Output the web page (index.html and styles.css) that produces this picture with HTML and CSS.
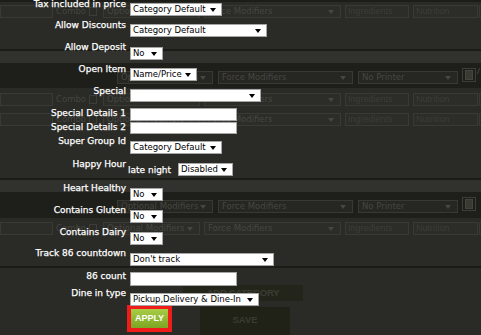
FILE: index.html
```html
<!DOCTYPE html>
<html>
<head>
<meta charset="utf-8">
<title>Item settings</title>
<link rel="stylesheet" href="styles.css">
</head>
<body>
<div class="page">
  <div class="bg">
    <div class="band-top"></div>
    <div class="sec s1">
      <div class="combo-row">
        <div class="f-in w53"></div>
        <span class="f-txt combo">Combo</span>
        <span class="f-chk"></span>
        <div class="f-sel w97 m3">Optional Modifiers</div>
        <div class="f-sel w137 m4">Force Modifiers</div>
        <div class="f-in w64 m4 ph">Ingredients</div>
        <div class="f-in w65 m4 ph">Nutrition</div>
        <div class="f-in w20 m1"></div>
      </div>
    </div>
    <div class="line"></div>
    <div class="light"></div>
    <div class="dark">
      <div class="printer-row">
        <div class="f-sel w96">Optional Modifiers</div>
        <div class="f-sel w135 m5">Force Modifiers</div>
        <div class="f-sel w100 m5">No Printer</div>
        <div class="f-icon"><span></span></div>
        <div class="f-grip"></div>
      </div>
    </div>
    <div class="sec s2">
      <div class="combo-row">
        <div class="f-in w53"></div>
        <span class="f-txt combo">Combo</span>
        <span class="f-chk"></span>
        <div class="f-sel w97 m3">Optional Modifiers</div>
        <div class="f-sel w137 m4">Force Modifiers</div>
        <div class="f-in w64 m4 ph">Ingredients</div>
        <div class="f-in w65 m4 ph">Nutrition</div>
        <div class="f-in w20 m1"></div>
      </div>
      <div class="combo-row second">
        <div class="f-in w53"></div>
        <span class="f-txt combo">Combo</span>
        <span class="f-chk"></span>
        <div class="f-sel w97 m3">Optional Modifiers</div>
        <div class="f-sel w137 m4">Force Modifiers</div>
        <div class="f-in w64 m4 ph">Ingredients</div>
        <div class="f-in w65 m4 ph">Nutrition</div>
        <div class="f-in w20 m1"></div>
      </div>
    </div>
    <div class="line"></div>
    <div class="light"></div>
    <div class="dark d2">
      <div class="printer-row">
        <div class="f-sel w96">Optional Modifiers</div>
        <div class="f-sel w135 m5">Force Modifiers</div>
        <div class="f-sel w100 m5">No Printer</div>
        <div class="f-icon"><span></span></div>
      </div>
    </div>
    <div class="sec s3">
      <div class="combo-row">
        <div class="f-in w53"></div>
        <span class="f-txt combo">Combo</span>
        <span class="f-chk"></span>
        <div class="f-sel w97 m3">Optional Modifiers</div>
        <div class="f-sel w137 m4">Force Modifiers</div>
        <div class="f-in w64 m4 ph">Ingredients</div>
        <div class="f-in w65 m4 ph">Nutrition</div>
        <div class="f-in w20 m1"></div>
      </div>
    </div>
    <div class="line"></div>
    <div class="foot">
      <div class="btn-add">ADD CATEGORY</div>
      <div class="btn-save">SAVE</div>
    </div>
  </div>

  <form class="overlay">
    <div class="frow h21">
      <label class="lbl">Tax included in price</label>
      <div class="ctl t4"><div class="sel w92">Category Default</div></div>
    </div>
    <div class="frow">
      <label class="lbl">Allow Discounts</label>
      <div class="ctl t4"><div class="sel w137">Category Default</div></div>
    </div>
    <div class="frow">
      <label class="lbl">Allow Deposit</label>
      <div class="ctl t5"><div class="sel w33">No</div></div>
    </div>
    <div class="frow">
      <label class="lbl">Open Item</label>
      <div class="ctl t4"><div class="sel w67">Name/Price</div></div>
    </div>
    <div class="frow">
      <label class="lbl">Special</label>
      <div class="ctl t3"><div class="sel w131"></div></div>
    </div>
    <div class="frow h14">
      <label class="lbl">Special Details 1</label>
      <div class="ctl t0"><div class="inp w107"></div></div>
    </div>
    <div class="frow h14">
      <label class="lbl">Special Details 2</label>
      <div class="ctl t0"><div class="inp w107 short"></div></div>
    </div>
    <div class="frow h23">
      <label class="lbl">Super Group Id</label>
      <div class="ctl t5"><div class="sel w92">Category Default</div></div>
    </div>
    <div class="frow h24">
      <label class="lbl">Happy Hour</label>
      <div class="ctl t4 hh"><span class="hh-txt">late night</span><div class="sel w55">Disabled</div></div>
    </div>
    <div class="frow">
      <label class="lbl">Heart Healthy</label>
      <div class="ctl t5"><div class="sel w33">No</div></div>
    </div>
    <div class="frow">
      <label class="lbl">Contains Gluten</label>
      <div class="ctl t5"><div class="sel w33">No</div></div>
    </div>
    <div class="frow h21">
      <label class="lbl">Contains Dairy</label>
      <div class="ctl t5"><div class="sel w33">No</div></div>
    </div>
    <div class="frow h23">
      <label class="lbl">Track 86 countdown</label>
      <div class="ctl t5"><div class="sel w144">Don't track</div></div>
    </div>
    <div class="frow h17">
      <label class="lbl">86 count</label>
      <div class="ctl t1"><div class="inp w107 tall"></div></div>
    </div>
    <div class="frow h17">
      <label class="lbl">Dine in type</label>
      <div class="ctl t5"><div class="sel w129">Pickup,Delivery &amp; Dine-In</div></div>
    </div>
    <div class="frow">
      <span class="lbl"></span>
      <div class="ctl apply-ctl"><div class="highlight"><button type="button" class="apply">APPLY</button></div></div>
    </div>
  </form>
</div>
</body>
</html>
```

FILE: styles.css
```css
html, body {
  margin: 0;
  padding: 0;
}
body {
  background: #2a2a26;
  width: 481px;
  height: 335px;
  overflow: hidden;
  font-family: "DejaVu Sans", Verdana, sans-serif;
}
.page {
  position: relative;
  width: 481px;
  height: 335px;
  overflow: hidden;
}

/* ---------- dimmed background page ---------- */
.bg {
  width: 481px;
  display: flex;
  flex-direction: column;
}
.band-top { height: 2px; background: #1c1c19; }
.line { height: 2px; background: #1b1b18; }
.light { height: 12px; background: #31312e; }
.dark { height: 25px; background: #1e1e1b; box-sizing: border-box; padding-top: 8px; }
.dark.d2 { height: 26px; }
.sec { box-sizing: border-box; }
.s1 { height: 47px; padding-top: 3px; }
.s2 { height: 90px; padding-top: 5px; }
.s3 { height: 48px; padding-top: 4px; }

.combo-row {
  display: flex;
  align-items: center;
  height: 13px;
  white-space: nowrap;
}
.combo-row.second { margin-top: 7px; }
.printer-row {
  display: flex;
  align-items: flex-start;
  height: 13px;
  padding-left: 117px;
  white-space: nowrap;
}

.f-in, .f-sel {
  box-sizing: border-box;
  height: 13px;
  border: 1px solid #3a3a35;
  background: #2c2c28;
  color: #474741;
  font-size: 8.5px;
  line-height: 11px;
  padding-left: 3px;
  overflow: hidden;
  flex: none;
}
.dark .f-sel { background: #262622; border-color: #393934; }
.f-in.ph {
  font-family: "Liberation Sans", Arial, sans-serif;
  font-size: 9px;
  color: #3d3d38;
  padding-left: 2px;
}
.f-sel { position: relative; }
.f-sel::after {
  content: "";
  position: absolute;
  right: 6px;
  top: 4px;
  border-left: 3.5px solid transparent;
  border-right: 3.5px solid transparent;
  border-top: 4px solid #474741;
}
.f-txt {
  color: #45453f;
  font-size: 8.5px;
  line-height: 11px;
}
.combo { margin-left: 3px; width: 32px; }
.f-chk {
  width: 6px;
  height: 7px;
  border: 1px solid #3d3d38;
  margin-left: 3px;
  flex: none;
}
.f-icon {
  width: 14px;
  height: 14px;
  box-sizing: border-box;
  border: 1px solid #3d3d38;
  margin-left: 4px;
  margin-top: -3px;
  display: flex;
  align-items: center;
  justify-content: center;
  flex: none;
}
.f-icon span {
  width: 6px;
  height: 8px;
  background: #3a3a35;
  border: 1px solid #45453f;
}
.f-grip {
  width: 3px;
  height: 6px;
  margin-left: 2px;
  margin-top: -3px;
  border-left: 1px solid #45453f;
  transform: skewX(-20deg);
}

.w20 { width: 20px; }
.w53 { width: 53px; }
.w64 { width: 64px; }
.w65 { width: 65px; }
.w96 { width: 96px; }
.w97 { width: 97px; }
.w100 { width: 100px; }
.w135 { width: 135px; }
.w137 { width: 137px; }
.m1 { margin-left: 1px; }
.m3 { margin-left: 6px; }
.m4 { margin-left: 4px; }
.m5 { margin-left: 5px; }

.foot {
  height: 67px;
  display: flex;
  flex-direction: column;
  align-items: flex-start;
}
.btn-add {
  margin-top: 17px;
  margin-left: 183px;
  width: 120px;
  height: 16px;
  background: #24251a;
  color: #3b3c32;
  font-family: "Liberation Sans", Arial, sans-serif;
  font-weight: bold;
  font-size: 9.5px;
  letter-spacing: -0.3px;
  line-height: 16px;
  text-align: center;
}
.btn-save {
  margin-top: 6px;
  margin-left: 200px;
  width: 90px;
  height: 30px;
  background: #212217;
  color: #3a3b31;
  font-family: "Liberation Sans", Arial, sans-serif;
  font-weight: bold;
  font-size: 9.5px;
  line-height: 26px;
  text-align: center;
}

/* ---------- foreground form ---------- */
.overlay {
  position: absolute;
  top: -1px;
  left: 0;
  margin: 0;
  display: flex;
  flex-direction: column;
}
.frow {
  display: flex;
  height: 22px;
  align-items: flex-start;
}
.frow.h14 { height: 14px; }
.frow.h17 { height: 17px; }
.frow.h21 { height: 21px; }
.frow.h23 { height: 23px; }
.frow.h24 { height: 24px; }
.lbl {
  width: 126px;
  flex: none;
  text-align: right;
  color: #ffffff;
  font-size: 9px;
  line-height: 11px;
  white-space: nowrap;
  -webkit-text-stroke: 0.25px #ffffff;
}
.ctl { margin-left: 4px; display: flex; align-items: center; }
.t0 { margin-top: 0; }
.t1 { margin-top: 1px; }
.t3 { margin-top: 3px; }
.t4 { margin-top: 4px; }
.t5 { margin-top: 5px; }

.sel, .inp {
  box-sizing: border-box;
  height: 13px;
  background: #ffffff;
  border: 1px solid #a6a6a6;
  color: #000000;
  font-size: 8.5px;
  line-height: 11px;
  padding-left: 2px;
  white-space: nowrap;
  overflow: hidden;
  flex: none;
}
.inp.short { height: 12px; }
.inp.tall { height: 14px; }
.sel { position: relative; }
.sel::after {
  content: "";
  position: absolute;
  right: 5px;
  top: 4px;
  border-left: 3.5px solid transparent;
  border-right: 3.5px solid transparent;
  border-top: 4px solid #000000;
}
.w33 { width: 33px; }
.w55 { width: 55px; }
.w67 { width: 67px; }
.w92 { width: 92px; }
.w107 { width: 107px; }
.w129 { width: 129px; }
.w131 { width: 131px; }
.w144 { width: 144px; }
.sel.w137 { width: 137px; }

.hh { align-items: flex-end; }
.hh-txt {
  color: #ffffff;
  font-size: 9px;
  line-height: 11px;
  margin-left: -2px;
  width: 50px;
  -webkit-text-stroke: 0.25px #ffffff;
}

.apply-ctl { margin-left: 1px; }
.highlight {
  border: 4px solid #f01b1b;
  display: flex;
}
.apply {
  width: 37px;
  height: 19px;
  margin: 0;
  padding: 0;
  border: 0;
  background: linear-gradient(#a9cc46, #7ca623);
  color: #ffffff;
  font-family: "Liberation Sans", Arial, sans-serif;
  font-weight: bold;
  font-size: 9px;
  line-height: 19px;
  text-align: center;
}
```
